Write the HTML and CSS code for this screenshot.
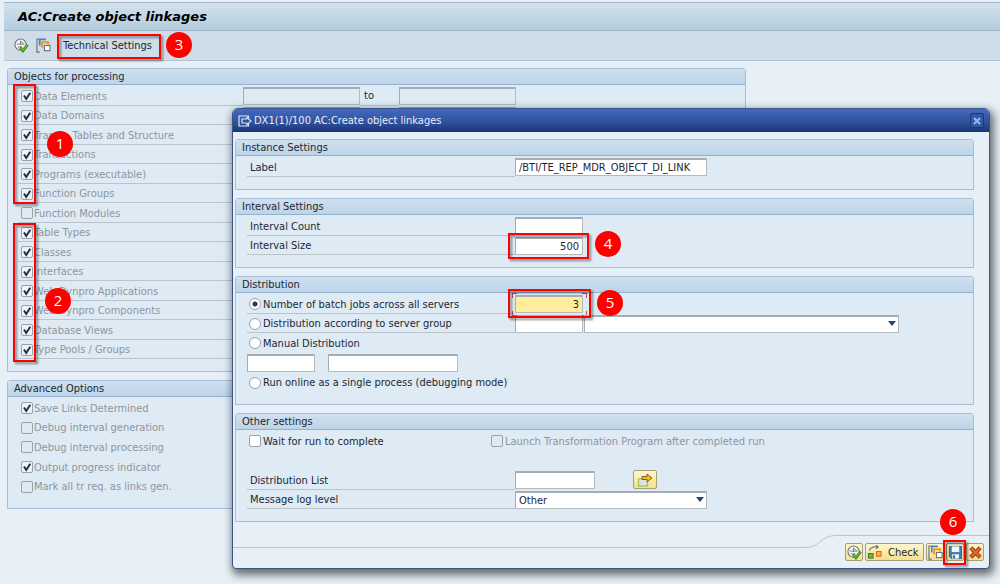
FILE: index.html
```html
<!DOCTYPE html>
<html lang="en">
<head>
    <meta charset="UTF-8">
    <meta name="viewport" content="width=device-width, initial-scale=1.0">
    <title>AC:Create object linkages</title>
    <link rel="stylesheet" href="styles.css">
</head>
<body>
    <!-- shared icons -->
    <svg class="sprite" aria-hidden="true">
        <symbol id="icon-run" viewBox="0 0 16 16">
            <circle cx="7" cy="7" r="6" fill="#f4f6f5" stroke="#6a6f6c" stroke-width="1.1"/>
            <path d="M7 3v4.500M3 6.500h8M4 9.500h5M7 3l3.500 3.500" fill="none" stroke="#777d7a" stroke-width="1"/>
            <path d="M6.500 10l3 3.500 5-6.500" fill="none" stroke="#3f7f22" stroke-width="3"/>
            <path d="M7 10.300l2.500 2.700 4.500-5.700" fill="none" stroke="#6fb83c" stroke-width="1.500"/>
        </symbol>
        <symbol id="icon-variant" viewBox="0 0 16 16">
            <path d="M3.500 1H1v14h3" fill="none" stroke="#6d7276" stroke-width="1.200"/>
            <path d="M4 8V1.500h6.500" fill="none" stroke="#3a86c8" stroke-width="1.800"/>
            <path d="M6.500 10.500v-6H13V7" fill="none" stroke="#f09a1c" stroke-width="2"/>
            <rect x="9" y="8" width="6" height="5.500" fill="#fff" stroke="#6d7276" stroke-width="1.200"/>
        </symbol>
        <symbol id="icon-check" viewBox="0 0 16 16">
            <path d="M3 6.500V4l4-2h4.500M9.500 0l2.500 2-2.500 2" fill="none" stroke="#777" stroke-width="1.200"/>
            <rect x="1.500" y="9" width="5" height="5" fill="#6fb83c" stroke="#3d7424"/>
            <rect x="10" y="7" width="5" height="5" fill="#ffb62e" stroke="#e8541c"/>
        </symbol>
        <symbol id="icon-save" viewBox="0 0 16 16">
            <path d="M1.500 1.500h13v13h-11l-2-2z" fill="#3e83b5" stroke="#245f8c"/>
            <rect x="4" y="1.500" width="8" height="6" fill="#f2f7fa"/>
            <rect x="4.500" y="10" width="7" height="4.500" fill="#fff"/>
            <rect x="5.500" y="11" width="2" height="3" fill="#245f8c"/>
        </symbol>
        <symbol id="icon-cancel" viewBox="0 0 16 16">
            <path d="M3 3l10 10M13 3L3 13" stroke="#a83a12" stroke-width="4.500"/>
            <path d="M3.500 3.500l9 9M12.500 3.500l-9 9" stroke="#e06a35" stroke-width="2.200"/>
        </symbol>
    </svg>

    <header class="titlebar">
        <h1>AC:Create object linkages</h1>
    </header>
    <div class="toolbar">
        <button type="button" class="tool" aria-label="Execute"><svg class="icon"><use href="#icon-run"/></svg></button>
        <button type="button" class="tool" aria-label="Get variant"><svg class="icon"><use href="#icon-variant"/></svg></button>
        <button type="button" class="tool tool-text">Technical Settings</button>
    </div>

    <main class="screen">
        <section class="group">
            <h2>Objects for processing</h2>
            <div class="rows rows-objects">
                <div class="row">
                    <label class="cell"><input type="checkbox" checked disabled>Data Elements</label>
                    <input type="text" class="field" aria-label="Data Elements from" disabled>
                    <span class="to">to</span>
                    <input type="text" class="field" aria-label="Data Elements to" disabled>
                </div>
                <div class="row">
                    <label class="cell"><input type="checkbox" checked disabled>Data Domains</label>
                    <input type="text" class="field" aria-label="Data Domains from" disabled>
                    <span class="to"></span>
                    <input type="text" class="field" aria-label="Data Domains to" disabled>
                </div>
                <div class="row"><label class="cell"><input type="checkbox" checked disabled>Transp. Tables and Structure</label></div>
                <div class="row"><label class="cell"><input type="checkbox" checked disabled>Transactions</label></div>
                <div class="row"><label class="cell"><input type="checkbox" checked disabled>Programs (executable)</label></div>
                <div class="row"><label class="cell"><input type="checkbox" checked disabled>Function Groups</label></div>
                <div class="row"><label class="cell"><input type="checkbox" disabled>Function Modules</label></div>
                <div class="row"><label class="cell"><input type="checkbox" checked disabled>Table Types</label></div>
                <div class="row"><label class="cell"><input type="checkbox" checked disabled>Classes</label></div>
                <div class="row"><label class="cell"><input type="checkbox" checked disabled>Interfaces</label></div>
                <div class="row"><label class="cell"><input type="checkbox" checked disabled>Web Dynpro Applications</label></div>
                <div class="row"><label class="cell"><input type="checkbox" checked disabled>Web Dynpro Components</label></div>
                <div class="row"><label class="cell"><input type="checkbox" checked disabled>Database Views</label></div>
                <div class="row"><label class="cell"><input type="checkbox" checked disabled>Type Pools / Groups</label></div>
            </div>
        </section>

        <section class="group">
            <h2>Advanced Options</h2>
            <div class="rows rows-5">
                <div class="row"><label class="cell plain"><input type="checkbox" checked disabled>Save Links Determined</label></div>
                <div class="row"><label class="cell plain"><input type="checkbox" disabled>Debug interval generation</label></div>
                <div class="row"><label class="cell plain"><input type="checkbox" disabled>Debug interval processing</label></div>
                <div class="row"><label class="cell plain"><input type="checkbox" checked disabled>Output progress indicator</label></div>
                <div class="row"><label class="cell plain"><input type="checkbox" disabled>Mark all tr req. as links gen.</label></div>
            </div>
        </section>
    </main>

    <div class="dialog" role="dialog" aria-labelledby="dialog-title">
        <div class="dialog-title">
            <svg class="dialog-icon" viewBox="0 0 14 12" aria-hidden="true">
                <path d="M10.500 3V1H1v10h9.500V9M9 4H4v4h5M9 4V2.500L13 6 9 9.500V8" fill="none" stroke="#dfe8fa" stroke-width="1.200"/>
            </svg>
            <span id="dialog-title">DX1(1)/100 AC:Create object linkages</span>
            <button type="button" class="close" aria-label="Close">
                <svg viewBox="0 0 8 8"><path d="M1 1l6 6M7 1L1 7" stroke="#8fb4f0" stroke-width="2.200"/></svg>
            </button>
        </div>

        <div class="dialog-body">
            <section class="group">
                <h2>Instance Settings</h2>
                <div class="rows rows-1">
                    <div class="row">
                        <label class="cell" for="label">Label</label>
                        <input type="text" id="label" class="field wide" value="/BTI/TE_REP_MDR_OBJECT_DI_LINK">
                    </div>
                </div>
            </section>

            <section class="group">
                <h2>Interval Settings</h2>
                <div class="rows rows-2">
                    <div class="row">
                        <label class="cell" for="count">Interval Count</label>
                        <input type="text" id="count" class="field short">
                    </div>
                    <div class="row">
                        <label class="cell" for="size">Interval Size</label>
                        <input type="text" id="size" class="field short number" value="500">
                    </div>
                </div>
            </section>

            <section class="group">
                <h2>Distribution</h2>
                <div class="rows rows-5">
                    <div class="row">
                        <label class="cell option"><input type="radio" name="dist" checked>Number of batch jobs across all servers</label>
                        <span class="focus"><input type="text" class="field short number active" aria-label="Number of batch jobs" value="3"></span>
                    </div>
                    <div class="row">
                        <label class="cell option"><input type="radio" name="dist">Distribution according to server group</label>
                        <input type="text" class="field short" aria-label="Server group">
                        <span class="select group-select"><select class="field" aria-label="Server group name"><option></option></select></span>
                    </div>
                    <div class="row"><label class="cell option plain"><input type="radio" name="dist">Manual Distribution</label></div>
                    <div class="row manual">
                        <input type="text" class="field short" aria-label="Manual jobs">
                        <input type="text" class="field medium" aria-label="Manual server">
                    </div>
                    <div class="row"><label class="cell option plain"><input type="radio" name="dist">Run online as a single process (debugging mode)</label></div>
                </div>
            </section>

            <section class="group">
                <h2>Other settings</h2>
                <div class="rows rows-4">
                    <div class="row launch">
                        <label class="cell option plain"><input type="checkbox">Wait for run to complete</label>
                        <label class="cell option plain off"><input type="checkbox" disabled>Launch Transformation Program after completed run</label>
                    </div>
                    <div class="row"></div>
                    <div class="row">
                        <label class="cell" for="list">Distribution List</label>
                        <input type="text" id="list" class="field list">
                        <button type="button" class="btn btn-goto" aria-label="Multiple selection">
                            <svg viewBox="0 0 16 14">
                                <rect x="1.500" y="6" width="9" height="7" fill="#dfe6e2" stroke="#9cc85c" stroke-width="1.300"/>
                                <path d="M5 3.500h5V1l5 4-5 4V6.500H5z" fill="#fcb813" stroke="#6a5a3a" stroke-width=".9"/>
                            </svg>
                        </button>
                    </div>
                    <div class="row">
                        <label class="cell" for="level">Message log level</label>
                        <span class="select wide"><select id="level" class="field"><option>Other</option></select></span>
                    </div>
                </div>
            </section>
        </div>

        <div class="dialog-footer">
            <div class="edge"></div>
            <svg class="curve" viewBox="0 0 30 14" aria-hidden="true"><path d="M0 12.500C14 12.500 14 .5 30 .5" fill="none" stroke="#b9c4cf"/></svg>
            <div class="actions">
                <button type="button" class="btn" aria-label="Execute"><svg class="icon"><use href="#icon-run"/></svg></button>
                <button type="button" class="btn btn-check"><svg class="icon"><use href="#icon-check"/></svg>Check</button>
                <button type="button" class="btn" aria-label="Get variant"><svg class="icon"><use href="#icon-variant"/></svg></button>
                <button type="button" class="btn" aria-label="Save"><svg class="icon"><use href="#icon-save"/></svg></button>
                <button type="button" class="btn" aria-label="Cancel"><svg class="icon"><use href="#icon-cancel"/></svg></button>
            </div>
        </div>
    </div>

    <!-- numbered call-outs -->
    <div class="frame frame-1"></div><div class="step step-1">1</div>
    <div class="frame frame-2"></div><div class="step step-2">2</div>
    <div class="frame frame-3"></div><div class="step step-3">3</div>
    <div class="frame frame-4"></div><div class="step step-4">4</div>
    <div class="frame frame-5"></div><div class="step step-5">5</div>
    <div class="frame frame-6"></div><div class="step step-6">6</div>
</body>
</html>
```
FILE: styles.css
```css
* {
    margin: 0;
    padding: 0;
    box-sizing: border-box;
}
body {
    position: relative;
    min-height: 100vh;
    padding: 2px 0 0 4px;
    font-family: "DejaVu Sans Condensed", "DejaVu Sans", sans-serif;
    font-size: 11px;
    color: #1c2733;
    background-color: #e8f0f7;
}
input, select, button {
    font: inherit;
    color: inherit;
}
button {
    cursor: pointer;
}
.sprite {
    display: none;
}
.icon {
    width: 15px;
    height: 15px;
    display: block;
}

/* Title and toolbar */
.titlebar {
    height: 29px;
    padding: 0 14px;
    border-top: 1px solid #a3b5c3;
    border-bottom: 1px solid #9fb4c4;
    background: linear-gradient(#d3e2ec, #b4cddf);
}
.titlebar h1 {
    font-family: "DejaVu Sans", sans-serif;
    font-size: 13px;
    line-height: 27px;
    font-style: italic;
    color: #000;
}
.toolbar {
    display: flex;
    align-items: center;
    gap: 7px;
    height: 30px;
    padding: 0 10px;
    border-bottom: 1px solid #b3c2cf;
    background-color: #cfdde8;
}
.tool {
    border: none;
    background: none;
}
.tool-text {
    margin-left: 5px;
}

/* Group boxes */
.screen {
    display: flex;
    flex-direction: column;
    gap: 8px;
    padding: 7px 254px 0 3px;
}
.group {
    border: 1px solid #a3bfd9;
    border-radius: 3px 3px 0 0;
    background-color: #deeaf4;
}
.group h2 {
    height: 16px;
    padding-left: 6px;
    font-size: 11px;
    line-height: 15px;
    font-weight: normal;
    border-bottom: 1px solid #93b1d0;
    background: linear-gradient(#d0e0ee, #bdd4e8);
}
.rows {
    display: grid;
    grid-auto-rows: 1fr;
    margin: 1px 11px 12px;
}
.screen .rows {
    margin-left: 10px;
}
.rows-objects {
    min-height: 273px;
}
.rows-1 {
    min-height: 20px;
}
.rows-2 {
    min-height: 39px;
}
.rows-4 {
    min-height: 78px;
}
.rows-5 {
    min-height: 98px;
}
.row {
    display: flex;
    align-items: stretch;
}
.cell {
    display: flex;
    align-items: center;
    gap: 2px;
    width: 268px;
    padding: 2px 0 0 3px;
    white-space: nowrap;
    border-bottom: 1px solid #bcc4ca;
}
.screen .cell {
    gap: 1px;
    width: 225px;
    color: #8f969e;
}
.plain, .screen .plain {
    border-bottom-color: transparent;
}
.option {
    padding-left: 2px;
}
.off {
    color: #8f969e;
}
.to {
    width: 39px;
    padding: 2px 0 0 4px;
    line-height: 16px;
    border-bottom: 1px solid #bcc4ca;
}

/* Fields */
.field {
    width: 117px;
    height: 18px;
    margin-top: 1px;
    padding: 0 3px;
    border: 1px solid #b5bbc0;
    border-top: 2px solid #a5acb2;
    border-left-color: #a5acb2;
    border-radius: 1px;
    outline: none;
    background-color: #fff;
}
.field:disabled {
    background-color: #deeaf4;
}
.short {
    width: 68px;
}
.medium {
    width: 130px;
}
.list {
    width: 80px;
}
.wide {
    width: 192px;
}
.number {
    text-align: right;
}
.active {
    background-color: #ffed9b;
}
.focus {
    position: relative;
    display: flex;
}
/* corner ticks round the active field */
.focus::before {
    content: "";
    position: absolute;
    inset: -1px -4px -2px -3px;
    background:
        linear-gradient(#c0504d, #c0504d) 0 0 / 5px 1px,
        linear-gradient(#c0504d, #c0504d) 0 0 / 1px 5px,
        linear-gradient(#c0504d, #c0504d) 100% 0 / 5px 1px,
        linear-gradient(#c0504d, #c0504d) 100% 0 / 1px 5px,
        linear-gradient(#c0504d, #c0504d) 0 100% / 5px 1px,
        linear-gradient(#c0504d, #c0504d) 0 100% / 1px 5px,
        linear-gradient(#c0504d, #c0504d) 100% 100% / 5px 1px,
        linear-gradient(#c0504d, #c0504d) 100% 100% / 1px 5px;
    background-repeat: no-repeat;
    pointer-events: none;
}
.select {
    position: relative;
    display: flex;
}
.select::after {
    content: "";
    position: absolute;
    right: 3px;
    top: 7px;
    border: 4px solid transparent;
    border-top: 5px solid #2a4473;
    border-bottom: none;
    pointer-events: none;
}
.select select {
    width: 100%;
    appearance: none;
}
.group-select {
    width: 315px;
    margin-left: 1px;
}
.manual {
    gap: 13px;
}
.launch .cell:first-child {
    width: 242px;
}
input[type="checkbox"], input[type="radio"] {
    appearance: none;
    flex: none;
    width: 12px;
    height: 12px;
    border: 1px solid #9aa1a8;
    border-radius: 2px;
    background: #fff center no-repeat;
}
input[type="radio"] {
    border-radius: 50%;
}
input[type="radio"]:checked {
    background-image: radial-gradient(circle, #2b3550 2px, transparent 3px);
}
input[type="checkbox"]:disabled {
    background-color: #deeaf4;
}
input[type="checkbox"]:checked {
    background-color: #edf3f9;
    background-image: url("data:image/svg+xml,%3Csvg xmlns='http://www.w3.org/2000/svg' width='10' height='10'%3E%3Cpath d='M2 4.500L4.200 8 8.300 1.800' fill='none' stroke='%23282c4c' stroke-width='2'/%3E%3C/svg%3E");
}

/* Dialog */
.dialog {
    position: absolute;
    top: 108px;
    left: 232px;
    right: 10px;
    border: 1px solid #3a5488;
    border-radius: 6px 6px 4px 4px;
    background-color: #e8f0f7;
    box-shadow: 2px 4px 8px 2px rgba(0, 0, 0, 0.55);
}
.dialog-title {
    display: flex;
    align-items: center;
    gap: 2px;
    height: 23px;
    padding: 0 5px;
    color: #e9eefa;
    border-radius: 5px 5px 0 0;
    background: linear-gradient(#4469be, #2e509b 60%, #1b3673);
}
.dialog-icon {
    width: 14px;
    height: 12px;
}
.close {
    display: flex;
    align-items: center;
    justify-content: center;
    width: 14px;
    height: 15px;
    margin-left: auto;
    border: 1px solid #1d3670;
    border-radius: 2px;
    background-color: #3357a5;
}
.close svg {
    width: 8px;
    height: 8px;
}
.dialog-body {
    display: flex;
    flex-direction: column;
    gap: 8px;
    padding: 7px 15px 13px 2px;
}
.dialog-footer {
    display: flex;
}
.edge {
    flex: 1;
    height: 13px;
    border-bottom: 1px solid #b9c4cf;
}
.curve {
    width: 30px;
    height: 14px;
}
.actions {
    display: flex;
    gap: 2px;
    height: 33px;
    padding: 7px 5px 7px 9px;
    border-top: 1px solid #b9c4cf;
}
.btn {
    display: flex;
    align-items: center;
    justify-content: center;
    width: 18px;
    height: 18px;
    border: 1px solid #a89f78;
    border-radius: 2px;
    background: linear-gradient(#fdf6cf, #f5e08e);
}
.btn-check {
    justify-content: flex-start;
    gap: 6px;
    width: 59px;
    padding-left: 1px;
}
.btn-goto {
    width: 24px;
    height: 19px;
    margin-left: 38px;
}
.btn-goto svg {
    width: 16px;
    height: 14px;
}

/* Call-outs */
.frame {
    position: absolute;
    border: 2px solid #f00;
    filter: drop-shadow(2px 2px 1px rgba(0, 0, 0, 0.45));
    pointer-events: none;
}
.step {
    position: absolute;
    width: 26px;
    height: 26px;
    border-radius: 50%;
    font-family: "Open Sans", sans-serif;
    font-size: 15px;
    line-height: 25px;
    text-align: center;
    color: #fff;
    background-color: #f00;
}
.frame-1 { left: 13px; top: 84px; width: 23px; height: 120px; }
.frame-2 { left: 13px; top: 223px; width: 23px; height: 139px; }
.frame-3 { left: 57px; top: 34px; width: 104px; height: 25px; }
.frame-4 { left: 508px; top: 233px; width: 81px; height: 26px; }
.frame-5 { left: 508px; top: 289px; width: 83px; height: 29px; }
.frame-6 { right: 34px; top: 540px; width: 23px; height: 25px; }
.step-1 { left: 47px; top: 131px; }
.step-2 { left: 45px; top: 288px; }
.step-3 { left: 166px; top: 32px; }
.step-4 { left: 595px; top: 231px; }
.step-5 { left: 597px; top: 290px; }
.step-6 { right: 34px; top: 509px; }
```
